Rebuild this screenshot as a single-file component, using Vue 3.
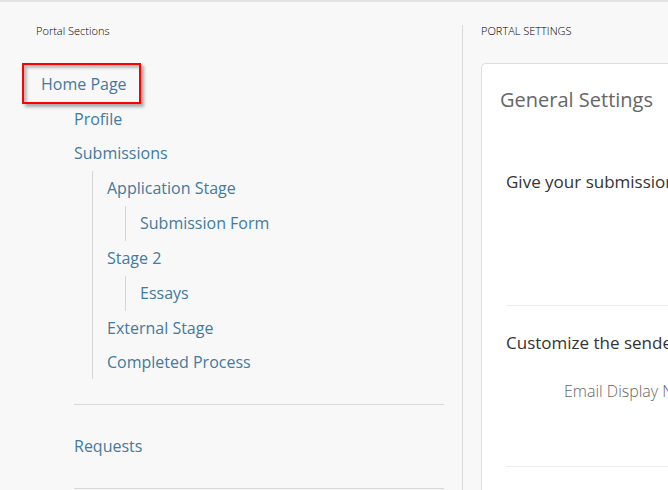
<template>
  <div class="portal">
    <nav class="sidebar" aria-label="Portal Sections">
      <h2 class="label">Portal Sections</h2>
      <a class="item home" href="#home">Home Page</a>
      <ul class="tree root">
        <li><a class="item leaf" href="#profile">Profile</a></li>
        <li>
          <a class="item" href="#submissions">Submissions</a>
          <ul class="tree nested">
            <li v-for="stage in stages" :key="stage.name">
              <a class="item" :class="{ leaf: !stage.child }" href="#stage">{{ stage.name }}</a>
              <ul v-if="stage.child" class="tree nested">
                <li><a class="item" href="#form">{{ stage.child }}</a></li>
              </ul>
            </li>
          </ul>
        </li>
      </ul>
      <div class="requests"><a class="item" href="#requests">Requests</a></div>
    </nav>
    <main class="settings">
      <h2 class="label">PORTAL SETTINGS</h2>
      <section class="card">
        <h1 class="title">General Settings</h1>
        <div class="block name">Give your submission</div>
        <div class="block sender">
          Customize the sender
          <div class="field">Email Display Name</div>
        </div>
      </section>
    </main>
  </div>
</template>

<script setup>
const stages = [
  { name: 'Application Stage', child: 'Submission Form' },
  { name: 'Stage 2', child: 'Essays' },
  { name: 'External Stage' },
  { name: 'Completed Process' },
]
</script>

<style>
body { background: #f8f8f8; }
</style>

<style scoped>
.portal {
  display: grid;
  grid-template-columns: minmax(0, 444px) minmax(0, 1fr);
  column-gap: 18px;
  min-height: 100vh;
  box-sizing: border-box;
  border-top: 2px solid #e2e2e2;
  font-family: "Open Sans", sans-serif;
  color: #333;
}
.label { margin: 0; font-size: 11px; line-height: 12px; font-weight: 300; color: #000; }
.sidebar { padding-top: 23px; }
.sidebar .label { padding-left: 36px; }
.item { display: block; font-size: 16px; line-height: 35px; font-weight: 400; color: #437a9f; text-decoration: none; white-space: nowrap; }
.leaf { line-height: 34px; }
.home {
  width: max-content;
  margin: 26px 0 -2px 22px;
  padding: 1px 12px 0 17px;
  line-height: 36px;
  border: 2px solid #f00;
  box-shadow: 3px 3px 3px #aaa, inset 3px 3px 3px #bbb;
}
.tree { list-style: none; margin: 0; padding: 0; }
.root { margin-left: 74px; }
.nested { margin-left: 18px; padding-left: 14px; border-left: 1px solid #d5d5d5; }
.requests { margin: 25px 0 0 74px; padding: 24px 0; border: solid #d8d8d8; border-width: 1px 0; }
.settings { display: flex; flex-direction: column; margin-top: 23px; border-left: 1px solid #d8d8d8; padding-left: 18px; }
.card { flex: 1; margin-top: 26px; border: solid #ddd; border-width: 1px 0 0 1px; border-radius: 5px 0 0; background: #fff; padding: 18px 0 0 18px; }
.title { margin: 0; font-size: 20px; line-height: 36px; font-weight: 400; color: #666; }
.block { margin-left: 6px; font-size: 17px; line-height: 24px; white-space: nowrap; overflow: hidden; border-bottom: 1px solid #eee; }
.name { padding: 52px 0 111px; }
.sender { padding: 25px 0 63px; }
.field { margin: 24px 0 0 58px; font-size: 16px; font-weight: 300; color: #666; }
</style>
